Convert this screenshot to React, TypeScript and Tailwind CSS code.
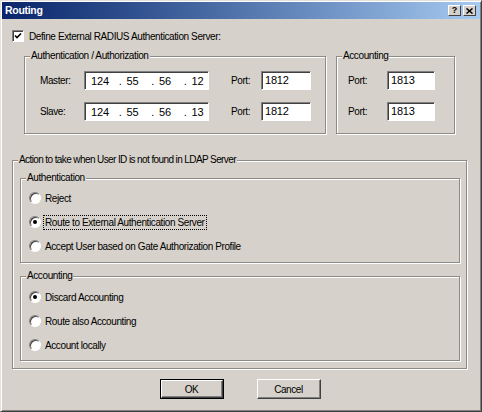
import React from "react";

const font = { fontFamily: '"Liberation Sans", Arial, sans-serif' };

function Group({ label, className, children, labelCls = "" }: { label: string; className: string; children?: React.ReactNode; labelCls?: string }) {
  return (
    <div className={`relative border border-[#8e8b86] shadow-[1px_1px_0_#ffffff,inset_1px_1px_0_#ffffff] ${className}`}>
      <span className={`absolute top-[-8px] left-[5px] bg-[#d6d1ca] px-[1px] leading-[14px] text-black ${labelCls}`}>{label}</span>
      {children}
    </div>
  );
}

function Sunken({ className, children }: { className: string; children?: React.ReactNode }) {
  return (
    <div className={`border border-t-[#808080] border-l-[#808080] border-b-white border-r-white bg-white shadow-[inset_1px_1px_0_#404040] ${className}`}>
      {children}
    </div>
  );
}

function Ip({ parts }: { parts: string[] }) {
  return (
    <Sunken className="w-[125px] h-[19px] flex items-center pl-[5px] text-[11px] tracking-[-0.2px] leading-[14px]">
      {parts.map((p, i) => (
        <React.Fragment key={i}>
          <span className="w-[20px] text-center">{p}</span>
          {i < 3 && <span className="w-[12.5px] text-right pr-[1px]">.</span>}
        </React.Fragment>
      ))}
    </Sunken>
  );
}

function Port({ value, w = "w-[50px]" }: { value: string; w?: string }) {
  return (
    <Sunken className={`${w} h-[19px] flex items-start pt-[1px] pl-[3px] text-[11px] tracking-[-0.2px] leading-[14px]`}>
      <span>{value}</span>
    </Sunken>
  );
}

function Radio({ checked, label, focus }: { checked?: boolean; label: string; focus?: boolean }) {
  return (
    <div className="h-[24px] flex items-center">
      <div className="w-[12px] h-[12px] rounded-full border border-t-[#808080] border-l-[#808080] border-b-white border-r-white bg-white shadow-[inset_1px_1px_0_#404040] flex items-center justify-center">
        {checked && <div className="w-[4px] h-[4px] rounded-full bg-black" />}
      </div>
      <span className={`ml-[2px] px-[1px] leading-[13px] border border-dotted ${focus ? "border-black" : "border-transparent"}`}>{label}</span>
    </div>
  );
}

function Button({ label, def }: { label: string; def?: boolean }) {
  return (
    <div className={`w-[64px] h-[20px] ${def ? "border border-black" : ""}`}>
      <div className="w-full h-full border border-t-white border-l-white border-b-[#404040] border-r-[#404040] shadow-[inset_-1px_-1px_0_#808080] flex items-center justify-center leading-[13px] text-black">
        {label}
      </div>
    </div>
  );
}

export default function App() {
  return (
    <div style={font} className="w-[482px] h-[412px] bg-[#d6d1ca] border border-t-[#e4e1dc] border-l-[#e4e1dc] border-b-[#404040] border-r-[#404040] shadow-[inset_1px_1px_0_#ffffff,inset_-1px_-1px_0_#808080] flex flex-col text-black text-[10px] tracking-[-0.4px] overflow-hidden">
      {/* title bar */}
      <div className="mt-[1px] mx-[1px] h-[17px] bg-gradient-to-r from-[#0a246a] to-[#a6caf0] flex items-center pl-[3px] pr-[4px]">
        <span className="text-white font-bold text-[10.5px] tracking-[-0.3px] leading-[13px]">Routing</span>
        <div className="ml-auto flex gap-[2px]">
          <div className="w-[13px] h-[11px] bg-[#d6d1ca] border border-t-white border-l-white border-b-[#404040] border-r-[#404040] flex items-center justify-center text-[9px] font-bold leading-[9px] tracking-normal">?</div>
          <div className="w-[13px] h-[11px] bg-[#d6d1ca] border border-t-white border-l-white border-b-[#404040] border-r-[#404040] flex items-center justify-center">
            <svg width="7" height="6" viewBox="0 0 7 6"><path d="M0.5 0.5 L6.5 5.5 M6.5 0.5 L0.5 5.5" stroke="#000" strokeWidth="1.5" /></svg>
          </div>
        </div>
      </div>

      {/* checkbox row */}
      <div className="mt-[11px] pl-[11px] h-[12px] flex items-center">
        <Sunken className="w-[12px] h-[12px] flex items-center justify-center">
          <svg width="8" height="8" viewBox="0 0 8 8"><path d="M1 3.5 L3 5.5 L7 1.5" stroke="#000" strokeWidth="1.6" fill="none" /></svg>
        </Sunken>
        <span className="ml-[5px] leading-[13px]">Define External RADIUS Authentication Server:</span>
      </div>

      {/* top groups */}
      <div className="mt-[14px] pl-[23px] flex">
        <Group label="Authentication / Authorization" className="w-[302px] h-[78px] pt-[14px] pl-[15px] flex flex-col gap-[12px]">
          {[["Master:", ["124", "55", "56", "12"]], ["Slave:", ["124", "55", "56", "13"]]].map(([l, p]) => (
            <div key={l as string} className="flex items-center h-[19px]">
              <span className="w-[44px] leading-[13px]">{l as string}</span>
              <Ip parts={p as string[]} />
              <span className="ml-[22px] w-[30px] leading-[13px]">Port:</span>
              <Port value="1812" />
            </div>
          ))}
        </Group>
        <Group label="Accounting" className="ml-[10px] w-[119px] h-[78px] pt-[14px] pl-[11px] flex flex-col gap-[12px]">
          {["a", "b"].map((k) => (
            <div key={k} className="flex items-center h-[19px]">
              <span className="w-[39px] leading-[13px]">Port:</span>
              <Port value="1813" w="w-[48px]" />
            </div>
          ))}
        </Group>
      </div>

      {/* action group */}
      <Group label="Action to take when User ID is not found in LDAP Server" labelCls="tracking-[-0.6px]" className="mt-[26px] ml-[11px] w-[455px] h-[209px] pt-[17px] pl-[7px] flex flex-col">
        <Group label="Authentication" className="w-[440px] h-[85px] pt-[7px] pl-[8px] flex flex-col">
          <Radio label="Reject" />
          <Radio label="Route to External Authentication Server" checked focus />
          <Radio label="Accept User based on Gate Authorization Profile" />
        </Group>
        <Group label="Accounting" className="mt-[13px] w-[440px] h-[85px] pt-[8px] pl-[8px] flex flex-col">
          <Radio label="Discard Accounting" checked />
          <Radio label="Route also Accounting" />
          <Radio label="Account locally" />
        </Group>
      </Group>

      {/* buttons */}
      <div className="mt-[10px] flex justify-center gap-[33px] pr-[2px]">
        <Button label="OK" def />
        <Button label="Cancel" />
      </div>
    </div>
  );
}
